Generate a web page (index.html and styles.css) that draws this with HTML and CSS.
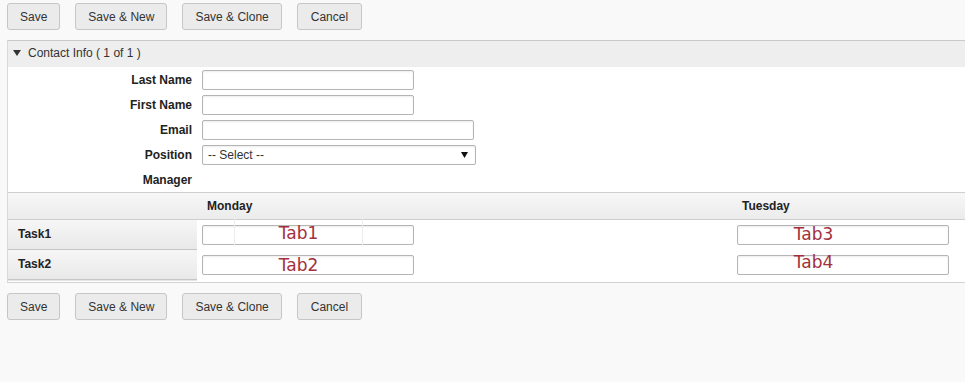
FILE: index.html
```html
<!DOCTYPE html>
<html lang="en">
<head>
<meta charset="UTF-8">
<title>Contact Info</title>
<link rel="stylesheet" href="styles.css">
</head>
<body>
<div class="toolbar">
    <button class="btn">Save</button>
    <button class="btn">Save &amp; New</button>
    <button class="btn">Save &amp; Clone</button>
    <button class="btn">Cancel</button>
</div>

<div class="section">
    <div class="section-head">
        <svg class="caret" width="8" height="6" viewBox="0 0 8 6"><polygon points="0,0 8,0 4,6" fill="#333"/></svg>
        <span>Contact Info ( 1 of 1 )</span>
    </div>
    <div class="form">
        <label class="lbl" for="lastName">Last Name</label>
        <div><input class="txt short" id="lastName" type="text"></div>
        <label class="lbl" for="firstName">First Name</label>
        <div><input class="txt short" id="firstName" type="text"></div>
        <label class="lbl" for="email">Email</label>
        <div><input class="txt long" id="email" type="text"></div>
        <label class="lbl" for="position">Position</label>
        <div class="select-wrap">
            <select class="txt sel" id="position">
                <option>-- Select --</option>
            </select>
            <svg class="sel-arrow" width="7" height="6" viewBox="0 0 7 6"><polygon points="0,0 7,0 3.5,6" fill="#111"/></svg>
        </div>
        <label class="lbl">Manager</label>
        <div></div>
    </div>
    <div class="grid">
        <div class="gh"></div>
        <div class="gh">Monday</div>
        <div class="gh">Tuesday</div>

        <div class="task">Task1</div>
        <div class="cell">
            <input class="txt short" type="text">
            <span class="tab tab-mon boxed">Tab1</span>
        </div>
        <div class="cell">
            <input class="txt short" type="text">
            <span class="tab tab-tue">Tab3</span>
        </div>

        <div class="task">Task2</div>
        <div class="cell">
            <input class="txt short" type="text">
            <span class="tab tab-mon low">Tab2</span>
        </div>
        <div class="cell">
            <input class="txt short" type="text">
            <span class="tab tab-tue lower">Tab4</span>
        </div>
    </div>
</div>

<div class="toolbar bottom">
    <button class="btn">Save</button>
    <button class="btn">Save &amp; New</button>
    <button class="btn">Save &amp; Clone</button>
    <button class="btn">Cancel</button>
</div>
</body>
</html>
```

FILE: styles.css
```css
body {
    margin: 0;
    font-family: "Liberation Sans", Arial, sans-serif;
    font-size: 12px;
    color: #333;
    background-color: #f9f9f9;
}
.toolbar {
    display: flex;
    gap: 15px;
    padding: 3px 0 0 7px;
}
.toolbar.bottom {
    padding-top: 10px;
}
.btn {
    height: 27px;
    padding: 0 12px;
    border: 1px solid #c6c6c6;
    border-radius: 3px;
    background-color: #ebebeb;
    font-family: "Liberation Sans", Arial, sans-serif;
    font-size: 12px;
    color: #333;
}
.btn:last-child {
    padding: 0 13px;
}
.section {
    margin: 10px 0 0 7px;
    border-top: 1px solid #c9c9c9;
    border-left: 1px solid #dadada;
    border-bottom: 1px solid #d2d2d2;
    background-color: #fff;
}
.section-head {
    display: flex;
    align-items: center;
    height: 26px;
    padding-left: 5px;
    background-color: #eee;
}
.caret {
    margin-right: 7px;
    margin-top: -2px;
}
.section-head span {
    margin-top: -2px;
}
.form {
    display: grid;
    grid-template-columns: 184px auto;
    grid-auto-rows: 25px;
    column-gap: 10px;
    align-items: center;
}
.lbl {
    text-align: right;
    font-weight: bold;
    color: #222;
}
.txt {
    box-sizing: border-box;
    height: 20px;
    margin: 0;
    border: 1px solid #b5b5b5;
    border-radius: 2px;
    background-color: #fff;
    box-shadow: inset 0 1px 2px rgba(0, 0, 0, 0.08);
    font-family: "Liberation Sans", Arial, sans-serif;
    font-size: 12px;
    color: #333;
    vertical-align: top;
}
.short {
    width: 212px;
}
.long {
    width: 272px;
}
.select-wrap {
    position: relative;
    width: 274px;
}
.sel {
    width: 274px;
    padding: 0 0 0 5px;
    appearance: none;
    -webkit-appearance: none;
}
.sel-arrow {
    position: absolute;
    right: 8px;
    top: 7px;
    pointer-events: none;
}
.grid {
    display: grid;
    grid-template-columns: 189px 535px 1fr;
    border-top: 1px solid #cfcfcf;
    padding-bottom: 2px;
}
.gh {
    height: 26px;
    line-height: 26px;
    padding-left: 10px;
    font-weight: bold;
    color: #222;
    background: linear-gradient(#f7f7f7, #ececec);
    border-bottom: 1px solid #cdcdcd;
}
.task {
    height: 29px;
    line-height: 28px;
    padding-left: 10px;
    font-weight: bold;
    color: #222;
    background: linear-gradient(#f6f6f6, #e9e9e9);
    border-bottom: 1px solid #c6c6c6;
    box-shadow: 0 1px 0 #e4e4e4;
}
.cell {
    position: relative;
    padding: 5px 0 0 5px;
}
.tab {
    position: absolute;
    top: 0;
    width: 129px;
    height: 29px;
    line-height: 29px;
    text-align: center;
    font-family: "DejaVu Sans", Verdana, sans-serif;
    font-size: 17px;
    color: #a3303c;
    box-sizing: border-box;
    pointer-events: none;
}
.tab.low {
    top: 1px;
}
.tab.lower {
    top: -2px;
}
.tab-mon {
    left: 37px;
}
.tab-tue {
    left: 17px;
}
.tab.boxed {
    top: -4px;
    line-height: 32px;
    border: 1px solid #ececec;
    border-bottom: none;
}
```
